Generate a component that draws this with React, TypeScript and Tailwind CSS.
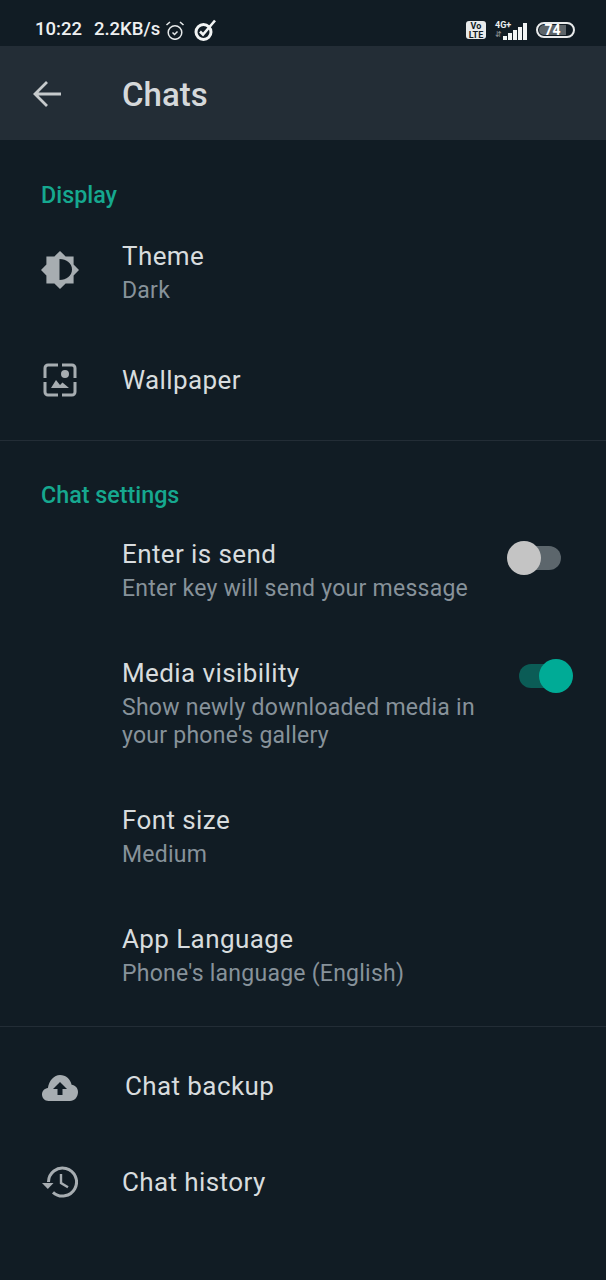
import { ReactNode } from "react"

function ThemeIcon() {
  return (
    <svg width="38" height="38" viewBox="0 0 38 38" fill="#a7adb1">
      <path
        fillRule="evenodd"
        d="M19 0l5.600 5.400h8v8L38 19l-5.400 5.600v8h-8L19 38l-5.600-5.400h-8v-8L0 19l5.400-5.600v-8h8zM18.500 8v21c7 0 12.500-4.500 12.500-10.500S25.500 8 18.500 8z"
      />
    </svg>
  )
}

function WallpaperIcon() {
  return (
    <svg width="34" height="34" viewBox="0 0 34 34" fill="none">
      <path
        d="M15 2H5a3 3 0 0 0-3 3v10M19 2h10a3 3 0 0 1 3 3v10M15 32H5a3 3 0 0 1-3-3V19M19 32h10a3 3 0 0 0 3-3V19"
        stroke="#a7adb1"
        strokeWidth="3"
      />
      <circle cx="22" cy="11" r="4" fill="#a7adb1" />
      <path d="M8 25l5-8 4 5 2.500-2.500L26 25z" fill="#a7adb1" />
    </svg>
  )
}

function BackupIcon() {
  return (
    <svg width="36" height="26" viewBox="0 0 36 26">
      <path
        fill="#a7adb1"
        fillRule="evenodd"
        d="M6.500 26C2.900 26 0 23.100 0 19.500c0-3.400 2.600-6.200 5.900-6.500C7.200 5.500 12 0 18 0c5.800 0 10.600 4.200 11.600 9.800 3.600.4 6.400 3.400 6.400 7.200 0 5-3.500 9-8 9zM18 7l-7 7h4.500v6h5v-6H25z"
      />
    </svg>
  )
}

function HistoryIcon() {
  return (
    <svg width="36" height="32" viewBox="0 0 36 32" fill="none">
      <path d="M6.500 16a14 14 0 1 1 4.500 10.300" stroke="#a7adb1" strokeWidth="3" />
      <path d="M0 17h11.500l-5.700 6z" fill="#a7adb1" />
      <path d="M19 8v9l7 4.200" stroke="#a7adb1" strokeWidth="2.400" />
    </svg>
  )
}

function AlarmIcon() {
  return (
    <svg width="20" height="20" viewBox="0 0 20 20" fill="none" stroke="#e6e9ea">
      <circle cx="10" cy="12.500" r="6.800" strokeWidth="1.500" />
      <path d="M1.500 5L5 2M18.500 5L15 2" strokeWidth="1.600" />
      <path d="M7.500 12.500l2 2 3-3" strokeWidth="1.500" />
    </svg>
  )
}

function TargetCheckIcon() {
  return (
    <svg width="22" height="22" viewBox="0 0 22 22" fill="none" stroke="#f2f4f4">
      <circle cx="9.500" cy="13" r="7.500" strokeWidth="3" />
      <path d="M6 12.500l3 3L21 1.500" strokeWidth="2.600" />
    </svg>
  )
}

function SignalBars() {
  return (
    <div className="flex items-end gap-[1px] h-[18px]">
      <div className="w-[4px] h-[4px] bg-[#f2f4f4]" />
      <div className="w-[4px] h-[7px] bg-[#f2f4f4]" />
      <div className="w-[4px] h-[10px] bg-[#f2f4f4]" />
      <div className="w-[4px] h-[13px] bg-[#f2f4f4]" />
      <div className="w-[4px] h-[17px] bg-[#f2f4f4]" />
    </div>
  )
}

function StatusBar() {
  return (
    <div className="h-[46px] flex items-center justify-between pl-[35px] pr-[31px] pt-[16px] pb-[2px] text-[#eef0f1]">
      <div className="flex items-center">
        <span className="text-[18.500px] font-medium">10:22</span>
        <span className="text-[18.500px] font-medium ml-[12px]">2.2KB/s</span>
        <div className="ml-[5px]">
          <AlarmIcon />
        </div>
        <div className="ml-[9px]">
          <TargetCheckIcon />
        </div>
      </div>
      <div className="flex items-center">
        <div className="w-[20px] h-[18px] rounded-[3px] bg-[#e8eaeb] text-[#101c25] text-[9px] leading-[8.500px] font-bold text-center pt-[1px]">
          Vo
          <br />
          LTE
        </div>
        <div className="ml-[9px] flex items-end">
          <div className="flex flex-col w-[8px]">
            <span className="text-[9px] leading-[10px] font-bold whitespace-nowrap">4G+</span>
            <span className="text-[8px] leading-[10px] text-[#8a9094]">⇵</span>
          </div>
          <SignalBars />
        </div>
        <div className="ml-[9px] w-[39px] h-[16px] rounded-full border-2 border-[#e8eaeb] p-[1px] flex items-center">
          <div className="w-[27px] h-full rounded-l-full bg-[#5c6469] text-[14px] leading-[10px] font-bold text-center text-white">74</div>
        </div>
      </div>
    </div>
  )
}

function SectionTitle({ children, className }: { children: ReactNode; className: string }) {
  return <div className={`pl-[41px] text-[23.300px] leading-[28px] font-medium text-[#16a88f] ${className}`}>{children}</div>
}

function Row({
  icon,
  title,
  subtitle,
  right,
  className,
  textClass = "",
}: {
  icon?: ReactNode
  title: string
  subtitle?: ReactNode
  right?: ReactNode
  className: string
  textClass?: string
}) {
  return (
    <div className={`flex items-start ${className}`}>
      <div className="w-[122px] shrink-0 flex justify-center pr-[2px]">{icon}</div>
      <div className={`flex-1 ${textClass}`}>
        <div className="text-[26px] leading-[34px] tracking-[0.4px] text-[#d8dcde]">{title}</div>
        {subtitle && <div className="text-[23px] leading-[28px] tracking-[0.25px] mt-[4px] text-[#87929a]">{subtitle}</div>}
      </div>
      {right}
    </div>
  )
}

function Toggle({ on }: { on: boolean }) {
  return (
    <div className={`relative w-[40px] h-[24px] rounded-full ${on ? "bg-[#0b5c56] mr-[47px]" : "bg-[#5c666c] mr-[45px]"}`}>
      <div
        className={`absolute top-[-5px] w-[34px] h-[34px] rounded-full ${on ? "right-[-14px] bg-[#00ab96]" : "left-[-14px] bg-[#c4c4c4]"}`}
      />
    </div>
  )
}

export default function App() {
  return (
    <div className="w-[606px] h-[1280px] overflow-hidden bg-[#111c24] font-['Roboto',sans-serif]">
      <StatusBar />
      <div className="h-[94px] bg-[#232d36] flex items-center">
        <div className="w-[122px] shrink-0 pl-[32px] pt-[1px]">
          <svg width="30" height="28" viewBox="0 0 30 28" fill="none" stroke="#c6cacc" strokeWidth="2.800">
            <path d="M29 14H3M15 2L3 14l12 12" />
          </svg>
        </div>
        <span className="text-[33px] pt-[3px] font-medium text-[#d5d8da]">Chats</span>
      </div>

      <SectionTitle className="mt-[41px]">Display</SectionTitle>
      <Row
        className="mt-[30px]"
        icon={
          <div className="mt-[12px]">
            <ThemeIcon />
          </div>
        }
        title="Theme"
        subtitle="Dark"
      />
      <Row className="mt-[58px]" icon={<WallpaperIcon />} title="Wallpaper" />
      <div className="h-px bg-[#232d36] mt-[43px]" />

      <SectionTitle className="mt-[40px]">Chat settings</SectionTitle>
      <Row
        className="mt-[28px]"
        title="Enter is send"
        subtitle="Enter key will send your message"
        right={
          <div className="mt-[9px]">
            <Toggle on={false} />
          </div>
        }
      />
      <Row
        className="mt-[53px]"
        title="Media visibility"
        subtitle={
          <>
            Show newly downloaded media in
            <br />
            your phone's gallery
          </>
        }
        right={
          <div className="mt-[8px]">
            <Toggle on />
          </div>
        }
      />
      <Row className="mt-[53px]" title="Font size" subtitle="Medium" />
      <Row className="mt-[53px]" title="App Language" subtitle="Phone's language (English)" />
      <div className="h-px bg-[#232d36] mt-[38px]" />

      <Row
        className="mt-[42px]"
        icon={
          <div className="mt-[6px]">
            <BackupIcon />
          </div>
        }
        title="Chat backup"
        textClass="pl-[3px]"
      />
      <Row
        className="mt-[62px]"
        icon={
          <div className="mt-[1px]">
            <HistoryIcon />
          </div>
        }
        title="Chat history"
      />
    </div>
  )
}
